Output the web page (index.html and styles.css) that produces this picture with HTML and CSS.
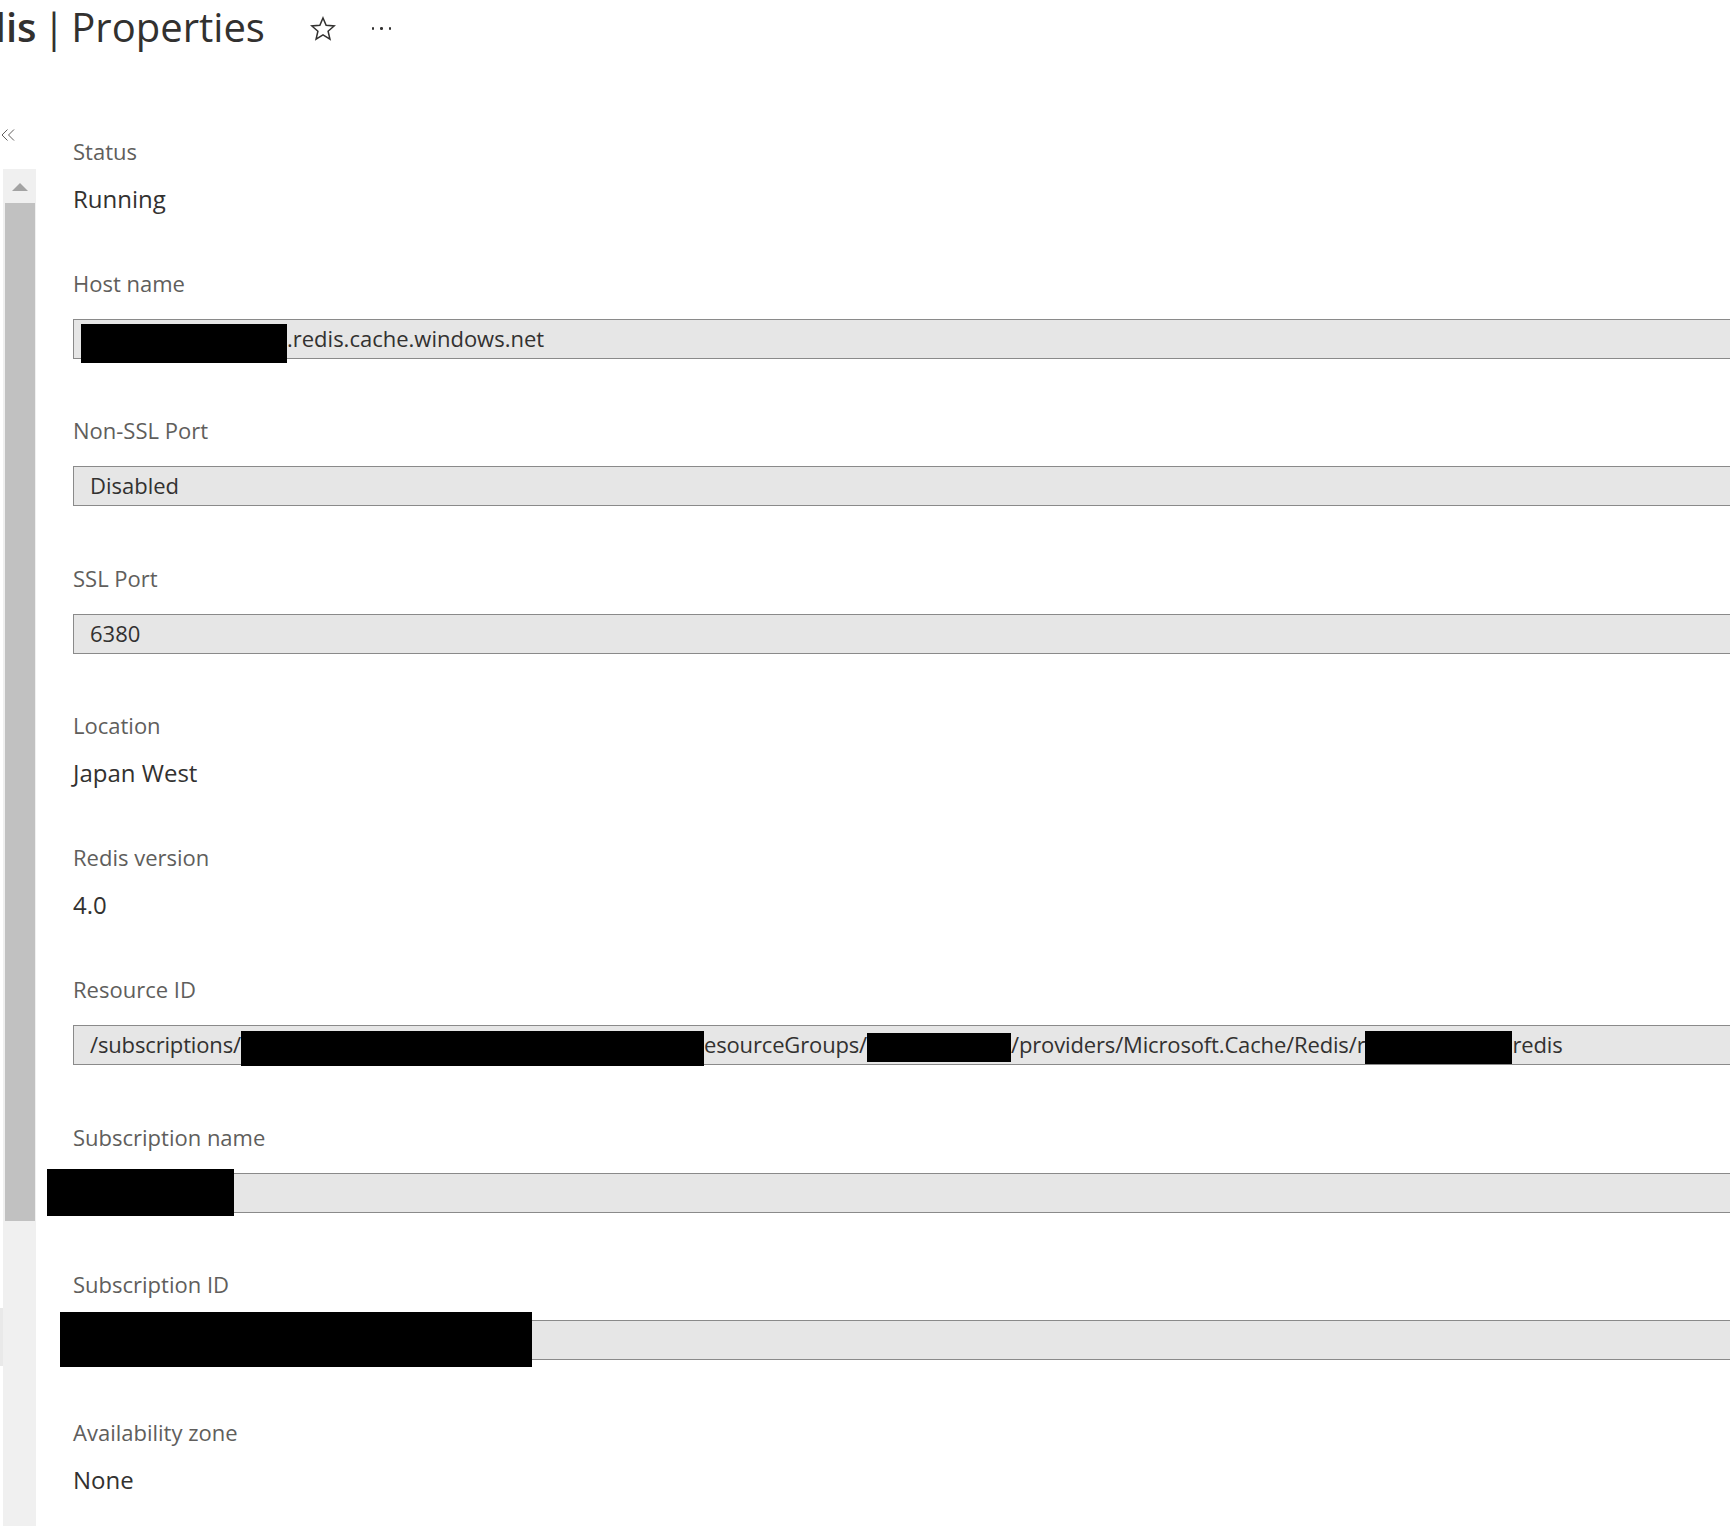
FILE: index.html
```html
<!DOCTYPE html>
<html lang="en">
<head>
<meta charset="utf-8">
<title>Redis | Properties</title>
<link rel="stylesheet" href="styles.css">
</head>
<body>
<header class="title-bar">
  <h1 class="title"><span class="name">dis</span> | Properties</h1>
  <svg class="star" viewBox="0 0 24 24" width="26" height="26" aria-hidden="true">
    <polygon points="12,1.8 14.9,8.6 22.3,9.2 16.7,14.1 18.4,21.4 12,17.5 5.6,21.4 7.3,14.1 1.7,9.2 9.1,8.6" fill="none" stroke="#323130" stroke-width="1.4" stroke-linejoin="miter"/>
  </svg>
  <span class="more" aria-label="More"><i></i><i></i><i></i></span>
</header>

<div class="layout">
  <aside class="side">
    <div class="collapse">
      <svg viewBox="0 0 14 12" width="14" height="12" aria-hidden="true">
        <polyline points="6.5,0.5 1,6 6.5,11.5" fill="none" stroke="#605e5c" stroke-width="1"/>
        <polyline points="13,0.5 7.5,6 13,11.5" fill="none" stroke="#605e5c" stroke-width="1"/>
      </svg>
    </div>
    <div class="track">
      <div class="arrow-area"><span class="arrow"></span></div>
      <div class="thumb"></div>
    </div>
    <div class="side-patch"></div>
  </aside>

  <main class="props">
    <section class="field text-field">
      <div class="label">Status</div>
      <div class="value">Running</div>
    </section>

    <section class="field box-field">
      <div class="label">Host name</div>
      <div class="box"><span class="redact host-redact"></span>.redis.cache.windows.net</div>
    </section>

    <section class="field box-field">
      <div class="label">Non-SSL Port</div>
      <div class="box">Disabled</div>
    </section>

    <section class="field box-field">
      <div class="label">SSL Port</div>
      <div class="box">6380</div>
    </section>

    <section class="field text-field">
      <div class="label">Location</div>
      <div class="value">Japan West</div>
    </section>

    <section class="field text-field">
      <div class="label">Redis version</div>
      <div class="value">4.0</div>
    </section>

    <section class="field box-field">
      <div class="label">Resource ID</div>
      <div class="box box-long">/subscriptions/<span class="redact rid-1"></span>esourceGroups/<span class="redact rid-2"></span>/providers/Microsoft.Cache/Redis/r<span class="redact rid-3"></span>redis</div>
    </section>

    <section class="field box-field">
      <div class="label">Subscription name</div>
      <div class="box"><span class="redact sub-name-redact"></span></div>
    </section>

    <section class="field box-field">
      <div class="label">Subscription ID</div>
      <div class="box"><span class="redact sub-id-redact"></span></div>
    </section>

    <section class="field text-field">
      <div class="label">Availability zone</div>
      <div class="value">None</div>
    </section>
  </main>
</div>
</body>
</html>
```

FILE: styles.css
```css
html, body {
  margin: 0;
  padding: 0;
}

body {
  width: 1730px;
  height: 1526px;
  overflow: hidden;
  background: #ffffff;
  color: #323130;
  font-family: "Open Sans", "Noto Sans", "Liberation Sans", sans-serif;
}

/* ---------- header ---------- */
.title-bar {
  height: 110px;
  display: flex;
  align-items: flex-start;
}

.title {
  margin: -1px 0 0 -19px;
  font-size: 40px;
  line-height: 56px;
  font-weight: 400;
  word-spacing: -4px;
  white-space: nowrap;
  color: #323130;
}

.title .name {
  font-weight: 600;
}

.star {
  margin: 16px 0 0 45px;
  flex: none;
}

.more {
  display: flex;
  gap: 6px;
  margin: 27px 0 0 36px;
}

.more i {
  display: block;
  width: 2.5px;
  height: 2.5px;
  border-radius: 50%;
  background: #323130;
}

/* ---------- layout ---------- */
.layout {
  display: flex;
  height: 1416px;
}

.side {
  width: 37px;
  flex: none;
  display: flex;
  flex-direction: column;
  position: relative;
}

.collapse {
  height: 59px;
  box-sizing: border-box;
  padding: 19px 0 0 1px;
}

.collapse svg {
  display: block;
}

.track {
  flex: 1;
  margin-left: 3px;
  width: 33px;
  background: #f0f0f0;
  display: flex;
  flex-direction: column;
}

.arrow-area {
  height: 34px;
  display: flex;
  justify-content: center;
  padding-top: 14px;
  box-sizing: border-box;
}

.arrow {
  width: 0;
  height: 0;
  border-left: 8px solid transparent;
  border-right: 8px solid transparent;
  border-bottom: 8px solid #a3a3a3;
}

.thumb {
  height: 1018px;
  margin-left: 2px;
  width: 30px;
  background: #c1c1c1;
}

.side-patch {
  position: absolute;
  left: 0;
  top: 1198px;
  width: 3px;
  height: 58px;
  background: #e9e9e9;
}

/* ---------- properties ---------- */
.props {
  flex: 1;
  min-width: 0;
  margin-left: 36px;
  padding-top: 25.5px;
}

.label {
  font-size: 22px;
  line-height: 30px;
  color: #605e5c;
  white-space: nowrap;
}

.text-field {
  margin-bottom: 53px;
}

.text-field .value {
  margin-top: 17px;
  font-size: 24px;
  line-height: 32px;
  color: #323130;
  white-space: nowrap;
}

.box-field {
  margin-bottom: 56.5px;
}

.box {
  margin-top: 21px;
  height: 40px;
  box-sizing: border-box;
  border: 1px solid #8a8a8a;
  border-right: none;
  background: #e6e6e6;
  padding-left: 16px;
  font-size: 22px;
  line-height: 36px;
  color: #323130;
  white-space: nowrap;
  position: relative;
}

.box-long {
  letter-spacing: -0.15px;
}

.redact {
  display: inline-block;
  vertical-align: top;
  background: #000;
}

.host-redact {
  width: 206px;
  height: 39px;
  margin: 4px 0 0 -9px;
}

.rid-1 {
  width: 463px;
  height: 35px;
  margin-top: 5px;
}

.rid-2 {
  width: 144px;
  height: 29px;
  margin-top: 7px;
}

.rid-3 {
  width: 147px;
  height: 33px;
  margin-top: 5px;
}

.sub-name-redact {
  width: 187px;
  height: 47px;
  margin: -5px 0 0 -43px;
}

.sub-id-redact {
  width: 472px;
  height: 55px;
  margin: -9px 0 0 -30px;
}
```
